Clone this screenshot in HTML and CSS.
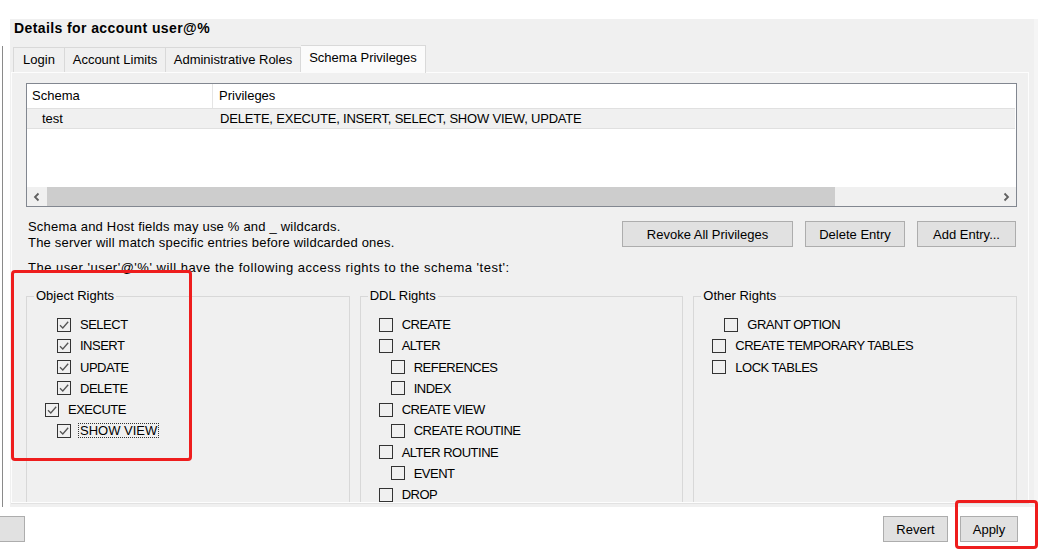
FILE: index.html
```html
<!DOCTYPE html>
<html lang="en">
<head>
    <meta charset="UTF-8">
    <meta name="viewport" content="width=device-width, initial-scale=1.0">
    <link rel="stylesheet" href="styles.css">
</head>
<body>
    <div class="window">
        <div class="side"><div class="side-line"></div></div>

        <div class="panel">
            <div class="title">Details for account user@%</div>

            <div class="tabs">
                <div class="tab tab-login">Login</div>
                <div class="tab tab-limits">Account Limits</div>
                <div class="tab tab-roles">Administrative Roles</div>
                <div class="tab tab-schema active">Schema Privileges</div>
            </div>

            <div class="pane">
                <!-- schema list -->
                <div class="grid">
                    <div class="grid-head">
                        <div class="col-schema head-cell">Schema</div>
                        <div class="col-privs">Privileges</div>
                    </div>
                    <div class="grid-row">
                        <div class="col-schema row-cell">test</div>
                        <div class="col-privs privs-list">DELETE, EXECUTE, INSERT, SELECT, SHOW VIEW, UPDATE</div>
                    </div>
                    <div class="grid-fill"></div>
                    <div class="hscroll">
                        <div class="arrow">
                            <svg width="8" height="10" viewBox="0 0 8 10"><path d="M5.5 1.5 L2 5 L5.5 8.5" fill="none" stroke="#606060" stroke-width="1.8"/></svg>
                        </div>
                        <div class="thumb"></div>
                        <div class="track"></div>
                        <div class="arrow">
                            <svg width="8" height="10" viewBox="0 0 8 10"><path d="M2.5 1.5 L6 5 L2.5 8.5" fill="none" stroke="#606060" stroke-width="1.8"/></svg>
                        </div>
                    </div>
                </div>

                <div class="info">
                    <div class="notes">
                        Schema and Host fields may use % and _ wildcards.<br>
                        The server will match specific entries before wildcarded ones.
                    </div>
                    <div class="actions">
                        <button class="btn btn-revoke">Revoke All Privileges</button>
                        <button class="btn btn-delete">Delete Entry</button>
                        <button class="btn btn-add">Add Entry...</button>
                    </div>
                </div>

                <div class="scope">The user 'user'@'%' will have the following access rights to the schema 'test':</div>

                <div class="rights">
                    <fieldset class="group">
                        <legend>Object Rights</legend>
                        <div class="check lvl1"><span class="box on"></span>SELECT</div>
                        <div class="check lvl1"><span class="box on"></span>INSERT</div>
                        <div class="check lvl1"><span class="box on"></span>UPDATE</div>
                        <div class="check lvl1"><span class="box on"></span>DELETE</div>
                        <div class="check lvl0"><span class="box on"></span>EXECUTE</div>
                        <div class="check lvl1"><span class="box on"></span><span class="focus">SHOW VIEW</span></div>
                    </fieldset>

                    <fieldset class="group">
                        <legend>DDL Rights</legend>
                        <div class="check lvl0"><span class="box"></span>CREATE</div>
                        <div class="check lvl0"><span class="box"></span>ALTER</div>
                        <div class="check lvl1"><span class="box"></span>REFERENCES</div>
                        <div class="check lvl1"><span class="box"></span>INDEX</div>
                        <div class="check lvl0"><span class="box"></span>CREATE VIEW</div>
                        <div class="check lvl1"><span class="box"></span>CREATE ROUTINE</div>
                        <div class="check lvl0"><span class="box"></span>ALTER ROUTINE</div>
                        <div class="check lvl1"><span class="box"></span>EVENT</div>
                        <div class="check lvl0"><span class="box"></span>DROP</div>
                    </fieldset>

                    <fieldset class="group">
                        <legend>Other Rights</legend>
                        <div class="check lvl1"><span class="box"></span>GRANT OPTION</div>
                        <div class="check lvl0"><span class="box"></span>CREATE TEMPORARY TABLES</div>
                        <div class="check lvl0"><span class="box"></span>LOCK TABLES</div>
                    </fieldset>
                </div>
            </div>
        </div>

        <div class="edge"></div>
    </div>

    <div class="footer">
        <button class="btn stub"></button>
        <div class="spacer"></div>
        <button class="btn btn-revert">Revert</button>
        <button class="btn btn-apply">Apply</button>
    </div>

    <!-- red annotation frames -->
    <div class="mark mark-rights"></div>
    <div class="mark mark-apply"></div>
</body>
</html>
```

FILE: styles.css
```css
/* page */
body {
    margin: 0;
    width: 1047px;
    height: 551px;
    overflow: hidden;
    position: relative;
    background: #fff;
    color: #000;
    font-family: "Liberation Sans", Arial, sans-serif;
    font-size: 13px;
}

.window {
    display: flex;
    padding-top: 19px;
    height: 488px;
}

.side {
    width: 10px;
}

.side-line {
    margin: 27px 0 0 2px;
    width: 1px;
    height: 461px;
    background: #8a8a8a;
}

.panel {
    width: 1024px;
    background: #f0f0f0;
}

.edge {
    width: 4px;
    background: #f5f5f5;
}

.title {
    height: 26px;
    line-height: 18px;
    padding-left: 4px;
    font-size: 14px;
    font-weight: bold;
    letter-spacing: 0.4px;
}

/* tabs */
.tabs {
    display: flex;
    align-items: flex-end;
    height: 27px;
    padding-left: 3px;
}

.tab {
    box-sizing: border-box;
    height: 25px;
    line-height: 23px;
    text-align: center;
    border: 1px solid #d9d9d9;
    border-bottom: none;
    border-left: none;
    background: #f0f0f0;
}

.tab-login {
    width: 52px;
    border-left: 1px solid #d9d9d9;
}

.tab-limits {
    width: 101px;
}

.tab-roles {
    width: 135px;
}

.tab-schema {
    width: 125px;
}

.tab.active {
    position: relative;
    z-index: 1;
    height: 28px;
    line-height: 24px;
    margin-bottom: -1px;
    background: #fbfbfb;
}

.pane {
    box-sizing: border-box;
    margin-left: 1px;
    width: 1018px;
    height: 431px;
    border: 1px solid #fdfdfd;
    box-shadow: 0 1px 0 #e2e2e2;
    padding: 10px 11px 0 14px;
    overflow: hidden;
}

/* schema list */
.grid {
    box-sizing: border-box;
    height: 124px;
    border: 1px solid #828790;
    background: #fff;
    display: flex;
    flex-direction: column;
}

.grid-head {
    display: flex;
    height: 24px;
    line-height: 24px;
}

.col-schema {
    box-sizing: border-box;
    width: 186px;
}

.head-cell {
    padding-left: 5px;
    border-right: 1px solid #e5e5e5;
}

.col-privs {
    padding-left: 6px;
}

.privs-list {
    letter-spacing: -0.2px;
}

.grid-row {
    display: flex;
    height: 21px;
    line-height: 19px;
    box-sizing: border-box;
    margin-right: 1px;
    background: #f0f0f0;
    border-top: 1px solid #e0e0e0;
    border-bottom: 1px solid #e0e0e0;
}

.row-cell {
    padding-left: 15px;
    margin-right: 1px;
}

.grid-fill {
    flex: 1;
}

.hscroll {
    display: flex;
    height: 19px;
    background: #f0f0f0;
}

.arrow {
    width: 20px;
    display: flex;
    align-items: center;
    justify-content: center;
}

.thumb {
    width: 788px;
    background: #cdcdcd;
}

.track {
    flex: 1;
}

/* notes and buttons */
.info {
    display: flex;
    justify-content: space-between;
    margin-top: 12px;
}

.notes {
    padding-left: 2px;
    line-height: 16px;
    letter-spacing: 0.2px;
}

.actions {
    display: flex;
    gap: 12px;
    margin-top: 2px;
    margin-right: 1px;
}

.btn {
    box-sizing: border-box;
    height: 26px;
    padding: 0;
    background: #e1e1e1;
    border: 1px solid #adadad;
    font-family: inherit;
    font-size: 13px;
    color: #000;
}

.btn-revoke {
    width: 171px;
}

.btn-delete {
    width: 100px;
}

.btn-add {
    width: 99px;
}

.scope {
    margin-top: 9px;
    padding-left: 2px;
    line-height: 16px;
    letter-spacing: 0.5px;
}

/* rights groups */
.rights {
    display: grid;
    grid-template-columns: repeat(3, 1fr);
    gap: 10px;
    margin-top: 12px;
}

.group {
    margin: 0;
    min-width: 0;
    height: 260px;
    padding: 10px 7px 0;
    border: 1px solid #d8d8d8;
}

.group legend {
    padding: 0 2px;
    line-height: 16px;
}

.check {
    display: flex;
    align-items: center;
    height: 21.25px;
    letter-spacing: -0.5px;
}

.lvl0 {
    margin-left: 11px;
}

.lvl1 {
    margin-left: 23px;
}

.box {
    box-sizing: border-box;
    width: 14px;
    height: 14px;
    margin-right: 9px;
    border: 1px solid #333;
    flex-shrink: 0;
}

.box.on {
    background: url("data:image/svg+xml,%3Csvg xmlns='http://www.w3.org/2000/svg' width='12' height='12' viewBox='0 0 12 12'%3E%3Cpath d='M2 6.3 L4.8 9 L10.2 2.8' fill='none' stroke='%23555' stroke-width='1.3'/%3E%3C/svg%3E") no-repeat center;
}

.focus {
    margin-left: -2px;
    padding: 0 1px;
    line-height: 13px;
    letter-spacing: 0;
    border: 1px dotted #333;
}

/* bottom bar */
.footer {
    display: flex;
    align-items: flex-start;
    height: 44px;
    box-sizing: border-box;
    padding-top: 9px;
}

.stub {
    width: 26px;
    margin-left: -1px;
}

.spacer {
    flex: 1;
}

.btn-revert {
    width: 65px;
}

.btn-apply {
    width: 58px;
    margin-left: 12px;
    margin-right: 29px;
}

/* annotation frames drawn over the dialog */
.mark {
    position: absolute;
    box-sizing: border-box;
    border: 3px solid #ee1d1d;
    border-radius: 4px;
}

.mark-rights {
    left: 11px;
    top: 270px;
    width: 181px;
    height: 191px;
}

.mark-apply {
    left: 955px;
    top: 500px;
    width: 83px;
    height: 49px;
}
```
